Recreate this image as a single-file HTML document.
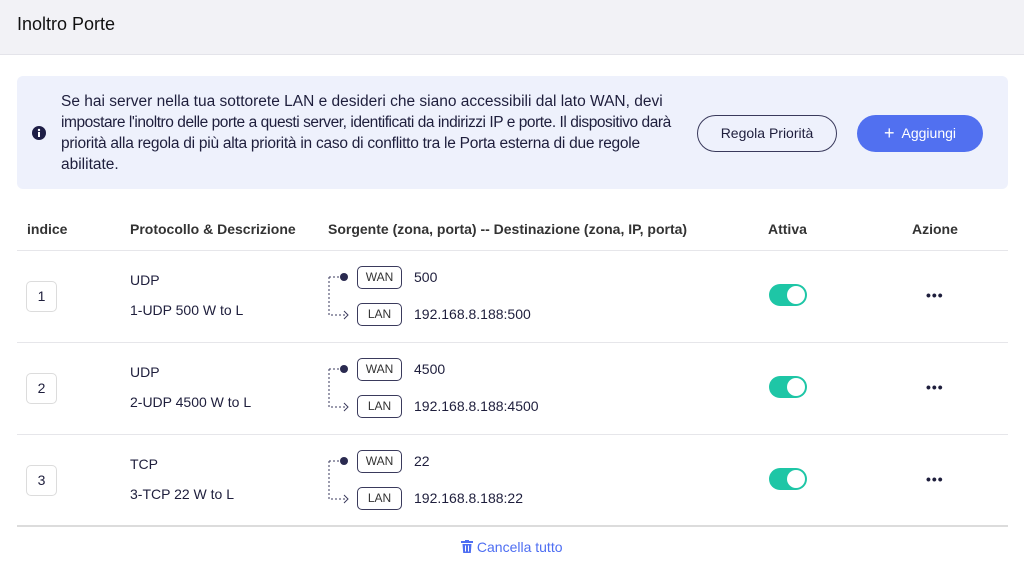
<!DOCTYPE html>
<html><head><meta charset="utf-8"><style>
*{margin:0;padding:0;box-sizing:border-box}
body{width:1024px;height:570px;background:#fff;font-family:"Liberation Sans",sans-serif;color:#1e1e3c;position:relative;overflow:hidden}
.abs{position:absolute}
.hdr{left:0;top:0;width:1024px;height:55px;background:#f2f2f6;border-bottom:1px solid #e4e4ea}
.hdr span{position:absolute;left:17px;top:14px;font-size:18px;color:#111}
.info{left:17px;top:76px;width:991px;height:113px;background:#eef1fc;border-radius:6px}
.info p{position:absolute;left:44px;top:15px;white-space:nowrap;font-size:15.5px;line-height:21px;color:#1e1e3c}
.btn1{left:697px;top:115px;width:140px;height:37px;border:1px solid #3a3a5c;border-radius:19px;font-size:14px;text-align:center;line-height:35px;color:#1e1e3c}
.btn2{left:857px;top:115px;width:126px;height:37px;background:#5170f0;border-radius:19px;font-size:14px;text-align:center;line-height:37px;color:#fff}
.th{top:221px;font-size:14px;font-weight:bold;color:#333}
.line{left:17px;width:991px;height:1px;background:#e6e6ea}
.idx{width:31px;height:31px;border:1px solid #dcdcdc;border-radius:5px;font-size:14px;text-align:center;line-height:29px;left:26px}
.t{font-size:14px;color:#1e1e3c}
.box{left:357px;width:45px;height:23px;border:1px solid #3a3a5c;border-radius:5px;font-size:12px;text-align:center;line-height:21px;color:#333}
.tog{left:769px;width:38px;height:22px;background:#1ec6a6;border-radius:11px}
.tog i{position:absolute;right:2px;top:2px;width:18px;height:18px;background:#fff;border-radius:50%}
.dots{left:926px;font-size:14px;font-weight:bold;letter-spacing:1px;color:#1e1e3c}
</style></head><body>
<div class="abs hdr"><span>Inoltro Porte</span></div>
<div class="abs info">
<svg class="abs" style="left:15px;top:50px" width="14" height="14" viewBox="0 0 14 14"><circle cx="7" cy="7" r="7" fill="#1e1e46"/><rect x="6" y="6" width="2" height="5" fill="#fff"/><circle cx="7" cy="4" r="1.2" fill="#fff"/></svg>
<p>Se hai server nella tua sottorete LAN e desideri che siano accessibili dal lato WAN, devi<br><span style="letter-spacing:-0.45px">impostare l'inoltro delle porte a questi server, identificati da indirizzi IP e porte. Il dispositivo darà</span><br><span style="letter-spacing:-0.25px">priorità alla regola di più alta priorità in caso di conflitto tra le Porta esterna di due regole</span><br>abilitate.</p>
</div>
<div class="abs btn1">Regola Priorità</div>
<div class="abs btn2"><span style="font-size:18px;vertical-align:-1px">+</span>&nbsp; Aggiungi</div>
<div class="abs th" style="left:27px">indice</div>
<div class="abs th" style="left:130px">Protocollo &amp; Descrizione</div>
<div class="abs th" style="left:328px">Sorgente (zona, porta) -- Destinazione (zona, IP, porta)</div>
<div class="abs th" style="left:768px">Attiva</div>
<div class="abs th" style="left:912px">Azione</div>
<div class="abs line" style="top:250px"></div>

<div class="abs idx" style="top:281px">1</div>
<div class="abs t" style="left:130px;top:272px">UDP</div>
<div class="abs t" style="left:130px;top:302px">1-UDP 500 W to L</div>
<svg class="abs" style="left:325px;top:270px" width="30" height="52"><path d="M4 7H18M4 7V45H22" stroke="#3a3a5c" stroke-dasharray="2 2" fill="none"/><path d="M19 41l4 4-4 4" stroke="#3a3a5c" fill="none"/><circle cx="19" cy="7" r="4" fill="#2a2a50"/></svg>
<div class="abs box" style="top:266px">WAN</div>
<div class="abs box" style="top:303px">LAN</div>
<div class="abs t" style="left:414px;top:269px">500</div>
<div class="abs t" style="left:414px;top:306px">192.168.8.188:500</div>
<div class="abs tog" style="top:284px"><i></i></div>
<div class="abs dots" style="top:287px">•••</div>
<div class="abs line" style="top:342px"></div>

<div class="abs idx" style="top:373px">2</div>
<div class="abs t" style="left:130px;top:364px">UDP</div>
<div class="abs t" style="left:130px;top:394px">2-UDP 4500 W to L</div>
<svg class="abs" style="left:325px;top:362px" width="30" height="52"><path d="M4 7H18M4 7V45H22" stroke="#3a3a5c" stroke-dasharray="2 2" fill="none"/><path d="M19 41l4 4-4 4" stroke="#3a3a5c" fill="none"/><circle cx="19" cy="7" r="4" fill="#2a2a50"/></svg>
<div class="abs box" style="top:358px">WAN</div>
<div class="abs box" style="top:395px">LAN</div>
<div class="abs t" style="left:414px;top:361px">4500</div>
<div class="abs t" style="left:414px;top:398px">192.168.8.188:4500</div>
<div class="abs tog" style="top:376px"><i></i></div>
<div class="abs dots" style="top:379px">•••</div>
<div class="abs line" style="top:434px"></div>

<div class="abs idx" style="top:465px">3</div>
<div class="abs t" style="left:130px;top:456px">TCP</div>
<div class="abs t" style="left:130px;top:486px">3-TCP 22 W to L</div>
<svg class="abs" style="left:325px;top:454px" width="30" height="52"><path d="M4 7H18M4 7V45H22" stroke="#3a3a5c" stroke-dasharray="2 2" fill="none"/><path d="M19 41l4 4-4 4" stroke="#3a3a5c" fill="none"/><circle cx="19" cy="7" r="4" fill="#2a2a50"/></svg>
<div class="abs box" style="top:450px">WAN</div>
<div class="abs box" style="top:487px">LAN</div>
<div class="abs t" style="left:414px;top:453px">22</div>
<div class="abs t" style="left:414px;top:490px">192.168.8.188:22</div>
<div class="abs tog" style="top:468px"><i></i></div>
<div class="abs dots" style="top:471px">•••</div>
<div class="abs line" style="top:525px;height:2px;background:#dcdcdc"></div>

<div class="abs" style="left:461px;top:539px;font-size:14px;color:#4e6ef2">
<svg width="12" height="13" viewBox="0 0 12 13" style="vertical-align:-1px"><rect x="0" y="1" width="12" height="2" fill="#4e6ef2"/><rect x="4" y="0" width="4" height="2" fill="#4e6ef2"/><path d="M1.5 4h9l-.7 9H2.2z" fill="#4e6ef2"/><path d="M4.5 5.5v6M7.5 5.5v6" stroke="#fff" stroke-width="1"/></svg> Cancella tutto</div>
</body></html>
